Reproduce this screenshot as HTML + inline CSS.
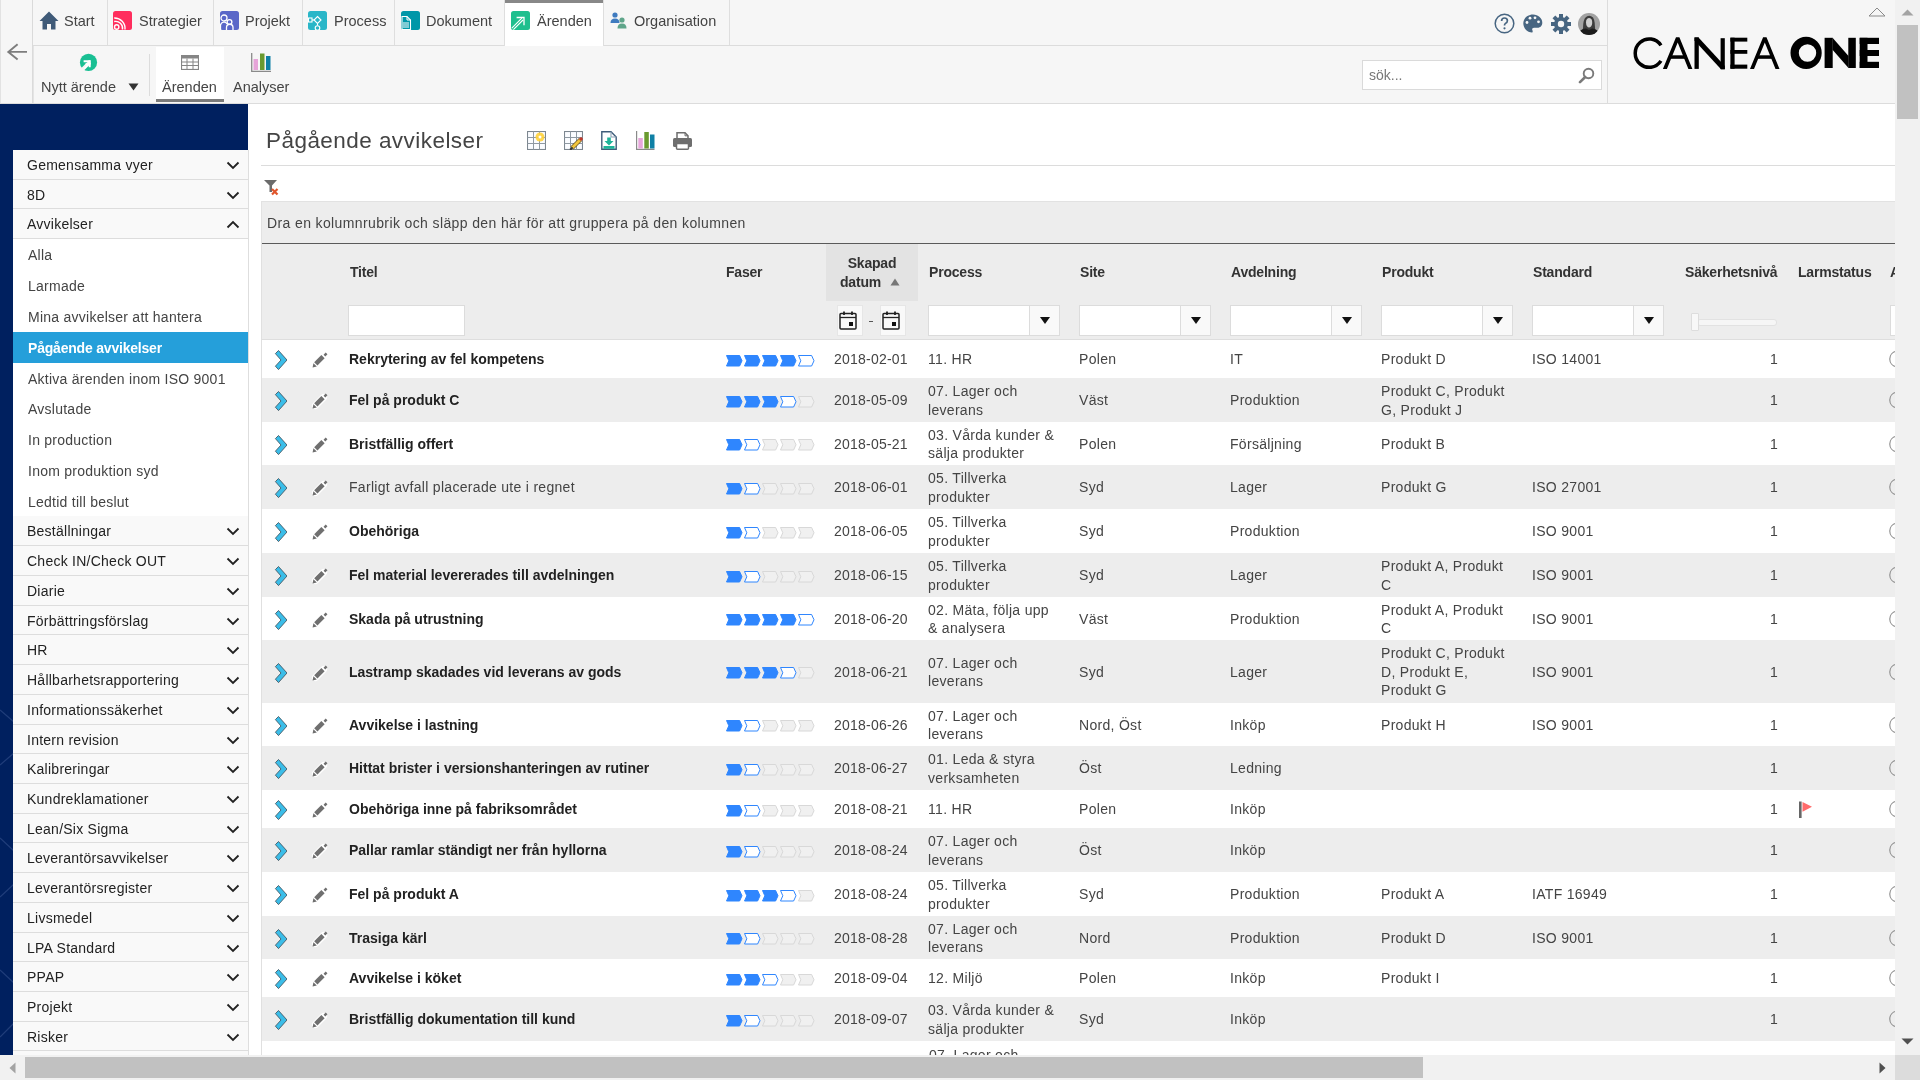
<!DOCTYPE html>
<html><head><meta charset="utf-8"><title>Pågående avvikelser</title>
<style>
*{box-sizing:border-box}
html,body{margin:0;padding:0}
body{width:1920px;height:1080px;overflow:hidden;position:relative;background:#fff;font-family:"Liberation Sans",sans-serif;font-size:14px;color:#333}
.abs{position:absolute}
#hdr{position:absolute;left:0;top:0;width:1895px;height:104px;background:#f6f6f6;border-bottom:1px solid #dcdcdc}
.vl{position:absolute;width:1px;background:#dedede}
.hl{position:absolute;height:1px;background:#dedede}
.tab{position:absolute;top:0;height:45px;font-size:14.5px;color:#444;line-height:45px;white-space:nowrap}
.tab .ic{position:absolute;top:11px;width:19px;height:19px;border-radius:3px}
.tl{position:absolute;top:14px;line-height:16px}
.tb{position:absolute;font-size:14.5px;color:#444;white-space:nowrap;line-height:16px}
#nav{position:absolute;left:0;top:104px;width:248px;height:951px;background:#00205f;overflow:hidden}
.sg,.ss{position:absolute;left:13px;width:235px;font-size:14px;white-space:nowrap;letter-spacing:0.25px}
.sg{background:#f9f9f9;border-bottom:1px solid #dddddd;color:#222}
.sg span{position:absolute;left:14px;top:7px;line-height:16px}
.ss{background:#fff;color:#444}
.ss span{position:absolute;left:15px;top:8px;line-height:16px}
.ss.sel{background:#259fda;color:#fff;font-weight:bold;letter-spacing:-0.2px}
.chev{position:absolute;left:226px}
#sidewhite{position:absolute;left:13px;top:150px;width:235px;height:905px;background:#fff}
.c{position:absolute;line-height:18px;white-space:nowrap;color:#444;font-size:14px;letter-spacing:0.3px}
.t{left:349px;color:#444}
.t.b{font-weight:bold;color:#222;letter-spacing:0}
.dt{left:834px;letter-spacing:0.22px}
.lv{left:1740px;width:38px;text-align:right}
.row{position:absolute;left:262px;width:1633px}
.exp{position:absolute;left:273px}
.pen{position:absolute;left:311px}
.ph{position:absolute;left:725.5px}
.hh{position:absolute;font-weight:bold;color:#333;font-size:14px;line-height:18px;white-space:nowrap;top:263px;letter-spacing:-0.2px}
.dd{position:absolute;top:305px;height:31px;background:#fff;border:1px solid #dcdcdc}
.dd i{position:absolute;right:0;top:0;width:30px;height:29px;background:#f9f9f9;border-left:1px solid #dcdcdc}
.dd i:after{content:"";position:absolute;left:10px;top:11px;border-left:5px solid transparent;border-right:5px solid transparent;border-top:7px solid #111}
</style></head><body>

<div id="wrap" style="position:absolute;left:0;top:0;width:1920px;height:1080px;will-change:transform">
<!-- header -->
<div id="hdr">
  <div class="vl" style="left:32px;top:0;height:103px;background:#dadada"></div><div class="vl" style="left:33px;top:46px;height:57px;background:#e4e4e4"></div>
  <div class="vl" style="left:0;top:0;height:103px;background:#e2e2e2"></div>
  <svg class="abs" style="left:6px;top:43px" width="22" height="18" viewBox="0 0 22 18"><path d="M21 8.9 H2.5 M11.6 1.2 L2.3 8.9 L11.6 16.6" fill="none" stroke="#7d7d7d" stroke-width="1.9"/></svg>
  <div class="hl" style="left:33px;top:45px;width:1575px;background:#dcdcdc"></div>
  <div class="vl" style="left:107px;top:0;height:45px"></div>
  <div class="vl" style="left:213px;top:0;height:45px"></div>
  <div class="vl" style="left:302px;top:0;height:45px"></div>
  <div class="vl" style="left:394px;top:0;height:45px"></div>
  <div class="vl" style="left:729px;top:0;height:45px"></div>
  <!-- selected tab -->
  <div class="abs" style="left:504px;top:0;width:100px;height:46px;background:#fff;border-left:1px solid #dedede;border-right:1px solid #dedede"></div>
  <div class="abs" style="left:505px;top:0;width:98px;height:3px;background:#888"></div>
  <!-- tab icons -->
  <svg class="abs" style="left:39px;top:11px" width="20" height="19" viewBox="0 0 20 19"><path d="M10 0.5 L19.5 10 H16.5 V18.5 H12 V13 H8 V18.5 H3.5 V10 H0.5 Z" fill="#3f5a78"/></svg>
  <div class="tb" style="left:64px;top:13px">Start</div>
  <svg class="abs" style="left:113px;top:11px" width="19" height="19" viewBox="0 0 19 19"><rect width="19" height="19" rx="2.5" fill="#ff2d5d"/><circle cx="3.7" cy="16" r="2.2" fill="none" stroke="#fff" stroke-width="1.4"/><path d="M1.2 10.5 A7 7 0 0 1 9.5 18.5" fill="none" stroke="#fff" stroke-width="1.4"/><path d="M1.2 7 A10.5 10.5 0 0 1 12 18.5" fill="none" stroke="#fff" stroke-width="1.4"/></svg>
  <div class="tb" style="left:139px;top:13px">Strategier</div>
  <svg class="abs" style="left:220px;top:11px" width="19" height="19" viewBox="0 0 19 19"><rect width="19" height="19" rx="2.5" fill="#5a67c8"/><circle cx="4" cy="7" r="3" fill="none" stroke="#fff" stroke-width="1.3"/><circle cx="9.5" cy="11" r="2.4" fill="none" stroke="#fff" stroke-width="1.3"/><path d="M0.5 19 V14 A3.5 3.5 0 0 1 7 13" fill="none" stroke="#fff" stroke-width="1.3"/><path d="M6.5 19 V16.5 A3 3 0 0 1 13 16.5 V19" fill="none" stroke="#fff" stroke-width="1.3"/></svg>
  <div class="tb" style="left:245px;top:13px">Projekt</div>
  <svg class="abs" style="left:308px;top:11px" width="19" height="19" viewBox="0 0 19 19"><rect width="19" height="19" rx="2.5" fill="#29b6c8"/><rect x="0.5" y="7" width="3.5" height="4" fill="none" stroke="#fff" stroke-width="1.1"/><path d="M4 9 H7" stroke="#fff" stroke-width="1.1"/><path d="M9.5 5.5 L13 9 L9.5 12.5 L6 9 Z" fill="none" stroke="#fff" stroke-width="1.1"/><path d="M9.5 12.5 V14.5" stroke="#fff" stroke-width="1.1"/><circle cx="9.5" cy="17" r="2.3" fill="none" stroke="#fff" stroke-width="1.1"/></svg>
  <div class="tb" style="left:334px;top:13px">Process</div>
  <svg class="abs" style="left:401px;top:11px" width="19" height="19" viewBox="0 0 19 19"><rect width="19" height="19" rx="2.5" fill="#0097a8"/><path d="M1 5 V18.5 H9.5 V9 L6 5.5 H1 Z" fill="none" stroke="#fff" stroke-width="1.1"/><path d="M6 5.5 V9 H9.5" fill="none" stroke="#fff" stroke-width="1"/><path d="M2 12 H8 M2 14 H8 M2 16 H8" stroke="#fff" stroke-width="1"/></svg>
  <div class="tb" style="left:426px;top:13px">Dokument</div>
  <svg class="abs" style="left:511px;top:11px" width="19" height="19" viewBox="0 0 19 19"><rect width="19" height="19" rx="2.5" fill="#1ebf8e"/><path d="M5.6 6.5 H13 V14.3" fill="none" stroke="#fff" stroke-width="1.3"/><path d="M0.8 17.2 L10.8 7.2 M2.4 18.6 L12 9" stroke="#fff" stroke-width="1.1"/></svg>
  <div class="tb" style="left:537px;top:13px">Ärenden</div>
  <svg class="abs" style="left:610px;top:12px" width="18" height="17" viewBox="0 0 18 17"><circle cx="5" cy="3" r="2.6" fill="#3f7bbf"/><path d="M0.5 11 Q0.5 6.5 5 6.5 Q9.5 6.5 9.5 11 Z" fill="#3f7bbf"/><circle cx="12" cy="8" r="2.6" fill="#5fa58a"/><path d="M7.5 16.5 Q7.5 11.5 12 11.5 Q16.5 11.5 16.5 16.5 Z" fill="#5fa58a"/></svg>
  <div class="tb" style="left:634px;top:13px">Organisation</div>

  <!-- second toolbar -->
  <svg class="abs" style="left:78px;top:52px" width="22" height="22" viewBox="0 0 22 22"><circle cx="10.5" cy="10.4" r="8.6" fill="#19bf93"/><path d="M4.4 17.6 L11.7 10.3" stroke="#f6f6f6" stroke-width="3.6"/><path d="M6.4 16.6 L11.4 11.6" stroke="#fff" stroke-width="1.3"/><path d="M5.6 9.2 H11.7 V15.3" fill="none" stroke="#fff" stroke-width="2"/><path d="M7.6 12.2 L11.4 12.2 L11.4 8.2" fill="none" stroke="#fff" stroke-width="2"/></svg>
  <div class="tb" style="left:41px;top:79px">Nytt ärende</div>
  <svg class="abs" style="left:128px;top:83px" width="11" height="8" viewBox="0 0 11 8"><path d="M0.5 0.5 H10.5 L5.5 7.5 Z" fill="#333"/></svg>
  <div class="vl" style="left:149px;top:54px;height:42px;background:#dcdcdc"></div>
  <div class="abs" style="left:156px;top:47px;width:68px;height:52px;background:#fff"></div>
  <div class="abs" style="left:156px;top:99px;width:68px;height:3px;background:#7a7a7a"></div>
  <svg class="abs" style="left:181px;top:55px" width="18" height="15" viewBox="0 0 18 15"><rect x="0.5" y="0.5" width="17" height="14" fill="#fff" stroke="#858585" stroke-width="1.2"/><rect x="0.5" y="0.5" width="17" height="3" fill="#858585"/><path d="M0.5 7 H17.5 M0.5 10.5 H17.5 M6 3.5 V14.5 M12 3.5 V14.5" stroke="#858585" stroke-width="1"/></svg>
  <div class="tb" style="left:162px;top:79px">Ärenden</div>
  <svg class="abs" style="left:251px;top:53px" width="21" height="19" viewBox="0 0 21 19"><path d="M0.7 0 V18.3 H20" fill="none" stroke="#8a8a8a" stroke-width="1.3"/><rect x="2.5" y="6" width="4.5" height="11" fill="#e6a3d8"/><rect x="9" y="0.5" width="4.5" height="16.5" fill="#6a9a2f"/><rect x="15" y="3" width="4.5" height="14" fill="#0f80a5"/></svg>
  <div class="tb" style="left:233px;top:79px">Analyser</div>

  <!-- right icons -->
  <svg class="abs" style="left:1494px;top:13px" width="21" height="21" viewBox="0 0 21 21"><circle cx="10.5" cy="10.5" r="9.3" fill="none" stroke="#476581" stroke-width="1.5"/><path d="M7.6 8 Q7.6 5 10.5 5 Q13.4 5 13.4 7.8 Q13.4 9.6 11.3 10.6 Q10.5 11.1 10.5 12.6" fill="none" stroke="#476581" stroke-width="1.7"/><circle cx="10.5" cy="15.3" r="1.1" fill="#476581"/></svg>
  <svg class="abs" style="left:1523px;top:14px" width="20" height="19" viewBox="0 0 20 19"><path d="M10 0.5 C4.5 0.5 0.3 4.5 0.3 9.3 C0.3 14 4 18.5 8.8 18.5 C10 18.5 9.8 17 9.3 16 C8.8 15 9.5 13.8 11 13.8 H14.5 C17.5 13.8 19.3 11.6 19.3 8.8 C19.3 4.2 15.2 0.5 10 0.5 Z" fill="#476581"/><circle cx="4" cy="8.5" r="1.4" fill="#f6f6f6"/><circle cx="7" cy="4.2" r="1.4" fill="#f6f6f6"/><circle cx="12" cy="3.8" r="1.4" fill="#f6f6f6"/><circle cx="15.5" cy="7.8" r="1.4" fill="#f6f6f6"/></svg>
  <svg class="abs" style="left:1551px;top:14px" width="20" height="20" viewBox="0 0 20 20"><g fill="#476581"><rect x="8" y="0" width="4" height="20"/><rect x="0" y="8" width="20" height="4"/><rect x="8" y="0" width="4" height="20" transform="rotate(45 10 10)"/><rect x="8" y="0" width="4" height="20" transform="rotate(-45 10 10)"/><circle cx="10" cy="10" r="7"/></g><circle cx="10" cy="10" r="3.2" fill="#f6f6f6"/></svg>
  <svg class="abs" style="left:1578px;top:13px" width="22" height="22" viewBox="0 0 22 22"><defs><clipPath id="av"><circle cx="11" cy="11" r="11"/></clipPath></defs><g clip-path="url(#av)"><rect width="22" height="22" fill="#a2a2a2"/><path d="M5 21 Q4.5 9 7 5 Q11 1 15 4.5 Q17.5 8 17 21 Z" fill="#3c3c3c"/><path d="M8 9.5 Q8 5 11.3 5 Q14.3 5.3 14.2 9.8 Q14 14 11.2 14.6 Q8.2 14.2 8 9.5 Z" fill="#cfcfcf"/><path d="M0 22 Q1 16 8 15.5 L11 17 L14 15.5 Q20.5 16 22 22 Z" fill="#1c1c1c"/></g></svg>
  <div class="vl" style="left:1607px;top:0;height:103px;background:#dcdcdc"></div>
  <div class="abs" style="left:1362px;top:60px;width:240px;height:30px;background:#fff;border:1px solid #dadada"></div>
  <div class="abs" style="left:1369px;top:67px;font-size:14px;color:#777;line-height:16px">sök...</div>
  <svg class="abs" style="left:1578px;top:67px" width="17" height="17" viewBox="0 0 17 17"><circle cx="10.5" cy="6.5" r="4.8" fill="none" stroke="#7a7a7a" stroke-width="1.9"/><path d="M7.2 10 L2 15.2" stroke="#7a7a7a" stroke-width="2.6" stroke-linecap="round"/></svg>
  <!-- logo -->
  <svg class="abs" style="left:1620px;top:25px" width="270" height="55" viewBox="0 0 270 55">
    <path d="M40.95 20.4 A14 14.2 0 1 0 40.95 35.9" fill="none" stroke="#000" stroke-width="3.5"/>
    <g fill="#000">
      <polygon points="42.9,43.9 56,12.2 59.4,12.2 72.4,43.9 68.4,43.9 57.7,17.6 46.9,43.9"/>
      <rect x="49" y="30.3" width="17.5" height="3.5"/>
      <rect x="74.5" y="12.4" width="4.3" height="31.5"/>
      <polygon points="74.5,12.4 78.5,12.4 104.8,41 104.8,44.2 101,44.2 74.5,15.6"/>
      <rect x="100.6" y="13.2" width="4.2" height="31"/>
      <rect x="110.4" y="12.7" width="4.2" height="31"/>
      <rect x="110.4" y="12.7" width="16.9" height="3.9"/>
      <rect x="110.4" y="25" width="16.9" height="3.8"/>
      <rect x="110.4" y="39.6" width="16.9" height="4.1"/>
      <polygon points="130,43.9 143.1,12.2 146.5,12.2 159.5,43.9 155.5,43.9 144.8,17.6 134,43.9"/>
      <rect x="136.1" y="30.3" width="17.5" height="3.5"/>
      <path fill-rule="evenodd" d="M186.1 11.8 A15.6 16.1 0 1 1 186.1 44 A15.6 16.1 0 1 1 186.1 11.8 Z M187.5 19.3 A8.7 8.75 0 1 0 187.5 36.8 A8.7 8.75 0 1 0 187.5 19.3 Z"/>
      <rect x="204.6" y="12.8" width="8.1" height="30.2"/>
      <rect x="228.3" y="12.8" width="7.5" height="30.2"/>
      <polygon points="212.5,12.8 228.5,31 228.5,43 212.5,24.8"/>
      <rect x="239.7" y="12.8" width="7.8" height="30.2"/>
      <rect x="239.7" y="12.8" width="19.3" height="6.2"/>
      <rect x="239.7" y="25" width="19.3" height="6"/>
      <rect x="239.7" y="36.8" width="19.3" height="6.2"/>
    </g>
  </svg>
  <svg class="abs" style="left:1868px;top:7px" width="18" height="10" viewBox="0 0 18 10"><path d="M1 9 L9 1 L17 9 Z" fill="none" stroke="#8a8a8a" stroke-width="1"/></svg>
</div>

<!-- sidebar -->
<div id="nav">
  <svg class="abs" style="left:0;top:0" width="248" height="951" viewBox="0 0 248 951"><g stroke="#3a5590" stroke-width="1.2" fill="none" opacity="0.55"><path d="M0 606 L14 618"/><path d="M0 661 L14 649"/><path d="M0 734 L14 747"/><path d="M0 793 L14 780"/><path d="M0 866 L14 879"/><path d="M0 933 L14 919"/></g></svg>
</div>
<div class="abs" style="left:0;top:0;width:248px;height:1055px;overflow:hidden"><div id="sidewhite"></div>
<div class="sg" style="top:150px;height:30px"><span>Gemensamma vyer</span></div>
<svg class="chev" style="top:161px" width="14" height="9" viewBox="0 0 14 9"><path d="M1.5 1.5 L7 7 L12.5 1.5" fill="none" stroke="#222" stroke-width="1.8"/></svg>
<div class="sg" style="top:180px;height:29px"><span>8D</span></div>
<svg class="chev" style="top:191px" width="14" height="9" viewBox="0 0 14 9"><path d="M1.5 1.5 L7 7 L12.5 1.5" fill="none" stroke="#222" stroke-width="1.8"/></svg>
<div class="sg" style="top:209px;height:30px"><span>Avvikelser</span></div>
<svg class="chev" style="top:220px" width="14" height="9" viewBox="0 0 14 9"><path d="M1.5 7.5 L7 2 L12.5 7.5" fill="none" stroke="#222" stroke-width="1.8"/></svg>
<div class="ss" style="top:239px;height:31px"><span>Alla</span></div>
<div class="ss" style="top:270px;height:31px"><span>Larmade</span></div>
<div class="ss" style="top:301px;height:31px"><span>Mina avvikelser att hantera</span></div>
<div class="ss sel" style="top:332px;height:31px"><span>Pågående avvikelser</span></div>
<div class="ss" style="top:363px;height:30px"><span>Aktiva ärenden inom ISO 9001</span></div>
<div class="ss" style="top:393px;height:31px"><span>Avslutade</span></div>
<div class="ss" style="top:424px;height:31px"><span>In production</span></div>
<div class="ss" style="top:455px;height:31px"><span>Inom produktion syd</span></div>
<div class="ss" style="top:486px;height:31px"><span>Ledtid till beslut</span></div>
<div class="sg" style="top:516px;height:30px"><span>Beställningar</span></div>
<svg class="chev" style="top:527px" width="14" height="9" viewBox="0 0 14 9"><path d="M1.5 1.5 L7 7 L12.5 1.5" fill="none" stroke="#222" stroke-width="1.8"/></svg>
<div class="sg" style="top:546px;height:30px"><span>Check IN/Check OUT</span></div>
<svg class="chev" style="top:557px" width="14" height="9" viewBox="0 0 14 9"><path d="M1.5 1.5 L7 7 L12.5 1.5" fill="none" stroke="#222" stroke-width="1.8"/></svg>
<div class="sg" style="top:576px;height:30px"><span>Diarie</span></div>
<svg class="chev" style="top:587px" width="14" height="9" viewBox="0 0 14 9"><path d="M1.5 1.5 L7 7 L12.5 1.5" fill="none" stroke="#222" stroke-width="1.8"/></svg>
<div class="sg" style="top:606px;height:29px"><span>Förbättringsförslag</span></div>
<svg class="chev" style="top:617px" width="14" height="9" viewBox="0 0 14 9"><path d="M1.5 1.5 L7 7 L12.5 1.5" fill="none" stroke="#222" stroke-width="1.8"/></svg>
<div class="sg" style="top:635px;height:30px"><span>HR</span></div>
<svg class="chev" style="top:646px" width="14" height="9" viewBox="0 0 14 9"><path d="M1.5 1.5 L7 7 L12.5 1.5" fill="none" stroke="#222" stroke-width="1.8"/></svg>
<div class="sg" style="top:665px;height:30px"><span>Hållbarhetsrapportering</span></div>
<svg class="chev" style="top:676px" width="14" height="9" viewBox="0 0 14 9"><path d="M1.5 1.5 L7 7 L12.5 1.5" fill="none" stroke="#222" stroke-width="1.8"/></svg>
<div class="sg" style="top:695px;height:30px"><span>Informationssäkerhet</span></div>
<svg class="chev" style="top:706px" width="14" height="9" viewBox="0 0 14 9"><path d="M1.5 1.5 L7 7 L12.5 1.5" fill="none" stroke="#222" stroke-width="1.8"/></svg>
<div class="sg" style="top:725px;height:29px"><span>Intern revision</span></div>
<svg class="chev" style="top:736px" width="14" height="9" viewBox="0 0 14 9"><path d="M1.5 1.5 L7 7 L12.5 1.5" fill="none" stroke="#222" stroke-width="1.8"/></svg>
<div class="sg" style="top:754px;height:30px"><span>Kalibreringar</span></div>
<svg class="chev" style="top:765px" width="14" height="9" viewBox="0 0 14 9"><path d="M1.5 1.5 L7 7 L12.5 1.5" fill="none" stroke="#222" stroke-width="1.8"/></svg>
<div class="sg" style="top:784px;height:30px"><span>Kundreklamationer</span></div>
<svg class="chev" style="top:795px" width="14" height="9" viewBox="0 0 14 9"><path d="M1.5 1.5 L7 7 L12.5 1.5" fill="none" stroke="#222" stroke-width="1.8"/></svg>
<div class="sg" style="top:814px;height:29px"><span>Lean/Six Sigma</span></div>
<svg class="chev" style="top:825px" width="14" height="9" viewBox="0 0 14 9"><path d="M1.5 1.5 L7 7 L12.5 1.5" fill="none" stroke="#222" stroke-width="1.8"/></svg>
<div class="sg" style="top:843px;height:30px"><span>Leverantörsavvikelser</span></div>
<svg class="chev" style="top:854px" width="14" height="9" viewBox="0 0 14 9"><path d="M1.5 1.5 L7 7 L12.5 1.5" fill="none" stroke="#222" stroke-width="1.8"/></svg>
<div class="sg" style="top:873px;height:30px"><span>Leverantörsregister</span></div>
<svg class="chev" style="top:884px" width="14" height="9" viewBox="0 0 14 9"><path d="M1.5 1.5 L7 7 L12.5 1.5" fill="none" stroke="#222" stroke-width="1.8"/></svg>
<div class="sg" style="top:903px;height:30px"><span>Livsmedel</span></div>
<svg class="chev" style="top:914px" width="14" height="9" viewBox="0 0 14 9"><path d="M1.5 1.5 L7 7 L12.5 1.5" fill="none" stroke="#222" stroke-width="1.8"/></svg>
<div class="sg" style="top:933px;height:29px"><span>LPA Standard</span></div>
<svg class="chev" style="top:944px" width="14" height="9" viewBox="0 0 14 9"><path d="M1.5 1.5 L7 7 L12.5 1.5" fill="none" stroke="#222" stroke-width="1.8"/></svg>
<div class="sg" style="top:962px;height:30px"><span>PPAP</span></div>
<svg class="chev" style="top:973px" width="14" height="9" viewBox="0 0 14 9"><path d="M1.5 1.5 L7 7 L12.5 1.5" fill="none" stroke="#222" stroke-width="1.8"/></svg>
<div class="sg" style="top:992px;height:30px"><span>Projekt</span></div>
<svg class="chev" style="top:1003px" width="14" height="9" viewBox="0 0 14 9"><path d="M1.5 1.5 L7 7 L12.5 1.5" fill="none" stroke="#222" stroke-width="1.8"/></svg>
<div class="sg" style="top:1022px;height:29px"><span>Risker</span></div>
<svg class="chev" style="top:1033px" width="14" height="9" viewBox="0 0 14 9"><path d="M1.5 1.5 L7 7 L12.5 1.5" fill="none" stroke="#222" stroke-width="1.8"/></svg>
<div class="sg" style="top:1051px;height:30px"><span>Rutiner</span></div>
<svg class="chev" style="top:1062px" width="14" height="9" viewBox="0 0 14 9"><path d="M1.5 1.5 L7 7 L12.5 1.5" fill="none" stroke="#222" stroke-width="1.8"/></svg>
</div>

<!-- main -->
<div class="abs" style="left:248px;top:150px;width:1px;height:905px;background:#dedede;z-index:2"></div>
<div class="abs" style="left:248px;top:104px;width:1647px;height:951px;background:#fff;overflow:hidden"></div>
<div class="abs" style="left:266px;top:128px;font-size:22.5px;color:#444;line-height:26px;white-space:nowrap;letter-spacing:0.45px">Pågående avvikelser</div>
<!-- toolbar icons -->
<svg class="abs" style="left:527px;top:131px" width="19" height="19" viewBox="0 0 19 19"><rect x="0.5" y="0.5" width="18" height="18" fill="#fafcff" stroke="#7d8790" stroke-width="1.1"/><path d="M6.5 0.5 V18.5 M12.5 0.5 V18.5 M0.5 6.5 H18.5 M0.5 12.5 H18.5" stroke="#8f99a2" stroke-width="1"/><circle cx="13" cy="6" r="4.5" fill="#ffd23a" opacity="0.9"/><circle cx="13" cy="6" r="1.5" fill="#fff"/></svg>
<svg class="abs" style="left:564px;top:131px" width="19" height="19" viewBox="0 0 19 19"><rect x="0.5" y="0.5" width="18" height="18" fill="#fafcff" stroke="#7d8790" stroke-width="1.1"/><path d="M6.5 0.5 V18.5 M12.5 0.5 V18.5 M0.5 6.5 H18.5 M0.5 12.5 H18.5" stroke="#8f99a2" stroke-width="1"/><path d="M8 17 L16.5 8.5" stroke="#5a4a1a" stroke-width="4.2"/><path d="M8 17 L16.5 8.5" stroke="#f2c53d" stroke-width="3"/><circle cx="17" cy="8" r="1.8" fill="#c0392b"/><path d="M6.2 18.8 L8.6 16.4" stroke="#333" stroke-width="2"/></svg>
<svg class="abs" style="left:601px;top:131px" width="16" height="19" viewBox="0 0 16 19"><path d="M0.8 0.8 H10 L15.2 6 V18.2 H0.8 Z" fill="#fff" stroke="#3f5d7a" stroke-width="1.4"/><path d="M10 0.8 V6 H15.2" fill="none" stroke="#8aa0b4" stroke-width="1.1"/><path d="M6.2 6.5 H9.8 V10 H12.5 L8 14.5 L3.5 10 H6.2 Z" fill="#1fb39a"/><rect x="2.5" y="15" width="11" height="2.8" fill="#1fb39a"/></svg>
<svg class="abs" style="left:636px;top:131px" width="19" height="19" viewBox="0 0 19 19"><path d="M0.6 0 V18.4 H18.5" fill="none" stroke="#8a8a8a" stroke-width="1.2"/><rect x="2.3" y="7" width="4.5" height="10.5" fill="#e8a6dc"/><rect x="8.3" y="1" width="4.5" height="16.5" fill="#6a9a2f"/><rect x="14" y="3.5" width="4.5" height="14" fill="#0f80a5"/></svg>
<svg class="abs" style="left:673px;top:132px" width="19" height="18" viewBox="0 0 19 18"><path d="M4 0.8 H12 L15 3.8 V7 H4 Z" fill="#fff" stroke="#6e6e6e" stroke-width="1.5"/><path d="M12 0.8 V3.8 H15" fill="none" stroke="#6e6e6e" stroke-width="1"/><rect x="0" y="6" width="19" height="9" rx="1.5" fill="#6e6e6e"/><rect x="3.5" y="11.5" width="12" height="5.7" rx="1" fill="#fff" stroke="#6e6e6e" stroke-width="1.5"/></svg>

<div class="hl" style="left:261px;top:165px;width:1634px;background:#dcdcdc"></div>
<svg class="abs" style="left:264px;top:180px" width="17" height="17" viewBox="0 0 17 17"><path d="M0 0 H13 L8 5.5 V12 H5.5 V5.5 Z" fill="#6b6b6b"/><path d="M8 9 L13.5 14.5 M13.5 9 L8 14.5" stroke="#e0552b" stroke-width="2.2"/></svg>

<!-- group panel -->
<div class="abs" style="left:261px;top:201px;width:1634px;height:43px;background:#ededed;border-top:1px solid #e2e2e2;border-left:1px solid #e2e2e2"></div>
<div class="abs" style="left:267px;top:215px;font-size:14px;color:#444;line-height:16px;white-space:nowrap;letter-spacing:0.38px">Dra en kolumnrubrik och släpp den här för att gruppera på den kolumnen</div>
<div class="hl" style="left:262px;top:243px;width:1633px;background:#5a5a5a"></div>
<!-- grid header -->
<div class="abs" style="left:261px;top:244px;width:1634px;height:96px;background:#ededed;border-left:1px solid #e0e0e0;border-bottom:1px solid #dedede"></div>
<div class="abs" style="left:826px;top:244px;width:92px;height:57px;background:#e3e3e3"></div>
<div class="hh" style="left:350px">Titel</div>
<div class="hh" style="left:726px">Faser</div>
<div class="hh" style="left:826px;width:92px;text-align:center;top:254px">Skapad</div><div class="hh" style="left:840px;top:273px">datum</div>
<svg class="abs" style="left:890px;top:278px" width="10" height="8" viewBox="0 0 10 8"><path d="M0.5 7.5 L5 0.5 L9.5 7.5 Z" fill="#777"/></svg>
<div class="hh" style="left:929px">Process</div>
<div class="hh" style="left:1080px">Site</div>
<div class="hh" style="left:1231px">Avdelning</div>
<div class="hh" style="left:1382px">Produkt</div>
<div class="hh" style="left:1533px">Standard</div>
<div class="hh" style="left:1685px">Säkerhetsnivå</div>
<div class="hh" style="left:1798px">Larmstatus</div>
<div class="hh" style="left:1890px;width:5px;overflow:hidden">A</div>
<!-- filters -->
<div class="abs" style="left:348px;top:305px;width:117px;height:31px;background:#fff;border:1px solid #dcdcdc"></div>
<div class="abs" style="left:837px;top:305px;width:26px;height:31px;background:#f9f9f9;border:1px solid #e6e6e6"></div>
<div class="abs" style="left:880px;top:305px;width:26px;height:31px;background:#f9f9f9;border:1px solid #e6e6e6"></div>
<svg class="abs" style="left:839px;top:311px" width="18" height="19" viewBox="0 0 18 19"><rect x="1" y="2.5" width="16" height="15.5" rx="1" fill="none" stroke="#222" stroke-width="1.5"/><path d="M1 6.5 H17" stroke="#222" stroke-width="1.3"/><path d="M5 0.5 V4 M13 0.5 V4" stroke="#222" stroke-width="1.8"/><rect x="10" y="11" width="4" height="4" fill="#111"/></svg>
<svg class="abs" style="left:882px;top:311px" width="18" height="19" viewBox="0 0 18 19"><rect x="1" y="2.5" width="16" height="15.5" rx="1" fill="none" stroke="#222" stroke-width="1.5"/><path d="M1 6.5 H17" stroke="#222" stroke-width="1.3"/><path d="M5 0.5 V4 M13 0.5 V4" stroke="#222" stroke-width="1.8"/><rect x="10" y="11" width="4" height="4" fill="#111"/></svg>
<div class="abs" style="left:869px;top:321px;width:4px;height:1px;background:#555"></div>
<div class="dd" style="left:928px;width:132px"><i></i></div>
<div class="dd" style="left:1079px;width:132px"><i></i></div>
<div class="dd" style="left:1230px;width:132px"><i></i></div>
<div class="dd" style="left:1381px;width:132px"><i></i></div>
<div class="dd" style="left:1532px;width:132px"><i></i></div>
<div class="abs" style="left:1697px;top:319px;width:80px;height:7px;background:#f6f6f6;border:1px solid #e2e2e2;border-radius:3px"></div>
<div class="abs" style="left:1691px;top:313px;width:8px;height:18px;background:#f8f8f8;border:1px solid #dddddd;border-radius:1px"></div>
<div class="abs" style="left:1890px;top:305px;width:5px;height:31px;background:#fff;border:1px solid #dcdcdc;border-right:none"></div>

<!-- rows -->
<div class="abs" style="left:261px;top:340px;width:1px;height:715px;background:#e0e0e0"></div>
<div class="row" style="top:340px;height:38px;background:#fff"></div>
<svg class="exp" style="top:349.0px" width="14" height="22" viewBox="0 0 14 22"><polygon points="5.5,1.5 14,11 5.5,20.6 2.4,17.2 8,11 2.4,4.6" fill="#3bbde8" stroke="#3a4a55" stroke-width="0.8" stroke-linejoin="round"/></svg>
<svg class="pen" style="top:351.0px" width="18" height="18" viewBox="0 0 18 18"><path d="M4.5 13.5 L12.5 5.5" stroke="#fff" stroke-width="7" stroke-linecap="round"/><path d="M4.8 12.8 L12 5.6" stroke="#6f6f6f" stroke-width="4.6" stroke-linecap="butt"/><polygon points="1.6,16.4 2.4,12.2 5.8,15.6" fill="#6f6f6f"/><path d="M13.6 2.6 L15.4 4.4" stroke="#6f6f6f" stroke-width="3"/></svg>
<div class="c t b" style="top:350.0px">Rekrytering av fel kompetens</div>
<svg class="ph" style="top:354.7px" width="92" height="12" viewBox="0 0 92 12"><polygon points="0.5,0.5 13.6,0.5 16,5.75 13.6,11 0.5,11 2.8,5.75" fill="#2f86fe" stroke="#2f86fe" stroke-width="1"/><polygon points="18.5,0.5 31.6,0.5 34,5.75 31.6,11 18.5,11 20.8,5.75" fill="#2f86fe" stroke="#2f86fe" stroke-width="1"/><polygon points="36.5,0.5 49.6,0.5 52,5.75 49.6,11 36.5,11 38.8,5.75" fill="#2f86fe" stroke="#2f86fe" stroke-width="1"/><polygon points="54.5,0.5 67.6,0.5 70,5.75 67.6,11 54.5,11 56.8,5.75" fill="#2f86fe" stroke="#2f86fe" stroke-width="1"/><polygon points="72.5,0.5 85.6,0.5 88,5.75 85.6,11 72.5,11 74.8,5.75" fill="#fff" stroke="#2f86fe" stroke-width="1"/></svg>
<div class="c dt" style="top:350.0px">2018-02-01</div>
<div class="c pr" style="left:928px;top:350.35px;line-height:18.5px">11. HR</div>
<div class="c" style="left:1079px;top:350.0px">Polen</div>
<div class="c" style="left:1230px;top:350.0px">IT</div>
<div class="c pd" style="left:1381px;top:350.35px;line-height:18.5px">Produkt D</div>
<div class="c" style="left:1532px;top:350.0px">ISO 14001</div>
<div class="c lv" style="top:350.0px">1</div>
<svg style="position:absolute;left:1888px;top:350.0px" width="8" height="18" viewBox="0 0 8 18"><path d="M8 1.2 A8 8 0 0 0 8 16.8" fill="none" stroke="#8a8a8a" stroke-width="1.1"/></svg>
<div class="row" style="top:378px;height:44px;background:#ededed"></div>
<svg class="exp" style="top:390.0px" width="14" height="22" viewBox="0 0 14 22"><polygon points="5.5,1.5 14,11 5.5,20.6 2.4,17.2 8,11 2.4,4.6" fill="#3bbde8" stroke="#3a4a55" stroke-width="0.8" stroke-linejoin="round"/></svg>
<svg class="pen" style="top:392.0px" width="18" height="18" viewBox="0 0 18 18"><path d="M4.5 13.5 L12.5 5.5" stroke="#fff" stroke-width="7" stroke-linecap="round"/><path d="M4.8 12.8 L12 5.6" stroke="#6f6f6f" stroke-width="4.6" stroke-linecap="butt"/><polygon points="1.6,16.4 2.4,12.2 5.8,15.6" fill="#6f6f6f"/><path d="M13.6 2.6 L15.4 4.4" stroke="#6f6f6f" stroke-width="3"/></svg>
<div class="c t b" style="top:391.0px">Fel på produkt C</div>
<svg class="ph" style="top:395.7px" width="92" height="12" viewBox="0 0 92 12"><polygon points="0.5,0.5 13.6,0.5 16,5.75 13.6,11 0.5,11 2.8,5.75" fill="#2f86fe" stroke="#2f86fe" stroke-width="1"/><polygon points="18.5,0.5 31.6,0.5 34,5.75 31.6,11 18.5,11 20.8,5.75" fill="#2f86fe" stroke="#2f86fe" stroke-width="1"/><polygon points="36.5,0.5 49.6,0.5 52,5.75 49.6,11 36.5,11 38.8,5.75" fill="#2f86fe" stroke="#2f86fe" stroke-width="1"/><polygon points="54.5,0.5 67.6,0.5 70,5.75 67.6,11 54.5,11 56.8,5.75" fill="#fff" stroke="#2f86fe" stroke-width="1"/><polygon points="72.5,0.5 85.6,0.5 88,5.75 85.6,11 72.5,11 74.8,5.75" fill="#f0f0f0" stroke="#d8d8d8" stroke-width="1"/></svg>
<div class="c dt" style="top:391.0px">2018-05-09</div>
<div class="c pr" style="left:928px;top:382.10px;line-height:18.5px">07. Lager och<br>leverans</div>
<div class="c" style="left:1079px;top:391.0px">Väst</div>
<div class="c" style="left:1230px;top:391.0px">Produktion</div>
<div class="c pd" style="left:1381px;top:382.10px;line-height:18.5px">Produkt C, Produkt<br>G, Produkt J</div>
<div class="c lv" style="top:391.0px">1</div>
<svg style="position:absolute;left:1888px;top:391.0px" width="8" height="18" viewBox="0 0 8 18"><path d="M8 1.2 A8 8 0 0 0 8 16.8" fill="none" stroke="#8a8a8a" stroke-width="1.1"/></svg>
<div class="row" style="top:422px;height:43px;background:#fff"></div>
<svg class="exp" style="top:433.5px" width="14" height="22" viewBox="0 0 14 22"><polygon points="5.5,1.5 14,11 5.5,20.6 2.4,17.2 8,11 2.4,4.6" fill="#3bbde8" stroke="#3a4a55" stroke-width="0.8" stroke-linejoin="round"/></svg>
<svg class="pen" style="top:435.5px" width="18" height="18" viewBox="0 0 18 18"><path d="M4.5 13.5 L12.5 5.5" stroke="#fff" stroke-width="7" stroke-linecap="round"/><path d="M4.8 12.8 L12 5.6" stroke="#6f6f6f" stroke-width="4.6" stroke-linecap="butt"/><polygon points="1.6,16.4 2.4,12.2 5.8,15.6" fill="#6f6f6f"/><path d="M13.6 2.6 L15.4 4.4" stroke="#6f6f6f" stroke-width="3"/></svg>
<div class="c t b" style="top:434.5px">Bristfällig offert</div>
<svg class="ph" style="top:439.2px" width="92" height="12" viewBox="0 0 92 12"><polygon points="0.5,0.5 13.6,0.5 16,5.75 13.6,11 0.5,11 2.8,5.75" fill="#2f86fe" stroke="#2f86fe" stroke-width="1"/><polygon points="18.5,0.5 31.6,0.5 34,5.75 31.6,11 18.5,11 20.8,5.75" fill="#fff" stroke="#2f86fe" stroke-width="1"/><polygon points="36.5,0.5 49.6,0.5 52,5.75 49.6,11 36.5,11 38.8,5.75" fill="#f0f0f0" stroke="#d8d8d8" stroke-width="1"/><polygon points="54.5,0.5 67.6,0.5 70,5.75 67.6,11 54.5,11 56.8,5.75" fill="#f0f0f0" stroke="#d8d8d8" stroke-width="1"/><polygon points="72.5,0.5 85.6,0.5 88,5.75 85.6,11 72.5,11 74.8,5.75" fill="#f0f0f0" stroke="#d8d8d8" stroke-width="1"/></svg>
<div class="c dt" style="top:434.5px">2018-05-21</div>
<div class="c pr" style="left:928px;top:425.60px;line-height:18.5px">03. Vårda kunder &<br>sälja produkter</div>
<div class="c" style="left:1079px;top:434.5px">Polen</div>
<div class="c" style="left:1230px;top:434.5px">Försäljning</div>
<div class="c pd" style="left:1381px;top:434.85px;line-height:18.5px">Produkt B</div>
<div class="c lv" style="top:434.5px">1</div>
<svg style="position:absolute;left:1888px;top:434.5px" width="8" height="18" viewBox="0 0 8 18"><path d="M8 1.2 A8 8 0 0 0 8 16.8" fill="none" stroke="#8a8a8a" stroke-width="1.1"/></svg>
<div class="row" style="top:465px;height:44px;background:#ededed"></div>
<svg class="exp" style="top:477.0px" width="14" height="22" viewBox="0 0 14 22"><polygon points="5.5,1.5 14,11 5.5,20.6 2.4,17.2 8,11 2.4,4.6" fill="#3bbde8" stroke="#3a4a55" stroke-width="0.8" stroke-linejoin="round"/></svg>
<svg class="pen" style="top:479.0px" width="18" height="18" viewBox="0 0 18 18"><path d="M4.5 13.5 L12.5 5.5" stroke="#fff" stroke-width="7" stroke-linecap="round"/><path d="M4.8 12.8 L12 5.6" stroke="#6f6f6f" stroke-width="4.6" stroke-linecap="butt"/><polygon points="1.6,16.4 2.4,12.2 5.8,15.6" fill="#6f6f6f"/><path d="M13.6 2.6 L15.4 4.4" stroke="#6f6f6f" stroke-width="3"/></svg>
<div class="c t" style="top:478.0px">Farligt avfall placerade ute i regnet</div>
<svg class="ph" style="top:482.7px" width="92" height="12" viewBox="0 0 92 12"><polygon points="0.5,0.5 13.6,0.5 16,5.75 13.6,11 0.5,11 2.8,5.75" fill="#2f86fe" stroke="#2f86fe" stroke-width="1"/><polygon points="18.5,0.5 31.6,0.5 34,5.75 31.6,11 18.5,11 20.8,5.75" fill="#fff" stroke="#2f86fe" stroke-width="1"/><polygon points="36.5,0.5 49.6,0.5 52,5.75 49.6,11 36.5,11 38.8,5.75" fill="#f0f0f0" stroke="#d8d8d8" stroke-width="1"/><polygon points="54.5,0.5 67.6,0.5 70,5.75 67.6,11 54.5,11 56.8,5.75" fill="#f0f0f0" stroke="#d8d8d8" stroke-width="1"/><polygon points="72.5,0.5 85.6,0.5 88,5.75 85.6,11 72.5,11 74.8,5.75" fill="#f0f0f0" stroke="#d8d8d8" stroke-width="1"/></svg>
<div class="c dt" style="top:478.0px">2018-06-01</div>
<div class="c pr" style="left:928px;top:469.10px;line-height:18.5px">05. Tillverka<br>produkter</div>
<div class="c" style="left:1079px;top:478.0px">Syd</div>
<div class="c" style="left:1230px;top:478.0px">Lager</div>
<div class="c pd" style="left:1381px;top:478.35px;line-height:18.5px">Produkt G</div>
<div class="c" style="left:1532px;top:478.0px">ISO 27001</div>
<div class="c lv" style="top:478.0px">1</div>
<svg style="position:absolute;left:1888px;top:478.0px" width="8" height="18" viewBox="0 0 8 18"><path d="M8 1.2 A8 8 0 0 0 8 16.8" fill="none" stroke="#8a8a8a" stroke-width="1.1"/></svg>
<div class="row" style="top:509px;height:44px;background:#fff"></div>
<svg class="exp" style="top:521.0px" width="14" height="22" viewBox="0 0 14 22"><polygon points="5.5,1.5 14,11 5.5,20.6 2.4,17.2 8,11 2.4,4.6" fill="#3bbde8" stroke="#3a4a55" stroke-width="0.8" stroke-linejoin="round"/></svg>
<svg class="pen" style="top:523.0px" width="18" height="18" viewBox="0 0 18 18"><path d="M4.5 13.5 L12.5 5.5" stroke="#fff" stroke-width="7" stroke-linecap="round"/><path d="M4.8 12.8 L12 5.6" stroke="#6f6f6f" stroke-width="4.6" stroke-linecap="butt"/><polygon points="1.6,16.4 2.4,12.2 5.8,15.6" fill="#6f6f6f"/><path d="M13.6 2.6 L15.4 4.4" stroke="#6f6f6f" stroke-width="3"/></svg>
<div class="c t b" style="top:522.0px">Obehöriga</div>
<svg class="ph" style="top:526.7px" width="92" height="12" viewBox="0 0 92 12"><polygon points="0.5,0.5 13.6,0.5 16,5.75 13.6,11 0.5,11 2.8,5.75" fill="#2f86fe" stroke="#2f86fe" stroke-width="1"/><polygon points="18.5,0.5 31.6,0.5 34,5.75 31.6,11 18.5,11 20.8,5.75" fill="#fff" stroke="#2f86fe" stroke-width="1"/><polygon points="36.5,0.5 49.6,0.5 52,5.75 49.6,11 36.5,11 38.8,5.75" fill="#f0f0f0" stroke="#d8d8d8" stroke-width="1"/><polygon points="54.5,0.5 67.6,0.5 70,5.75 67.6,11 54.5,11 56.8,5.75" fill="#f0f0f0" stroke="#d8d8d8" stroke-width="1"/><polygon points="72.5,0.5 85.6,0.5 88,5.75 85.6,11 72.5,11 74.8,5.75" fill="#f0f0f0" stroke="#d8d8d8" stroke-width="1"/></svg>
<div class="c dt" style="top:522.0px">2018-06-05</div>
<div class="c pr" style="left:928px;top:513.10px;line-height:18.5px">05. Tillverka<br>produkter</div>
<div class="c" style="left:1079px;top:522.0px">Syd</div>
<div class="c" style="left:1230px;top:522.0px">Produktion</div>

<div class="c" style="left:1532px;top:522.0px">ISO 9001</div>
<div class="c lv" style="top:522.0px">1</div>
<svg style="position:absolute;left:1888px;top:522.0px" width="8" height="18" viewBox="0 0 8 18"><path d="M8 1.2 A8 8 0 0 0 8 16.8" fill="none" stroke="#8a8a8a" stroke-width="1.1"/></svg>
<div class="row" style="top:553px;height:44px;background:#ededed"></div>
<svg class="exp" style="top:565.0px" width="14" height="22" viewBox="0 0 14 22"><polygon points="5.5,1.5 14,11 5.5,20.6 2.4,17.2 8,11 2.4,4.6" fill="#3bbde8" stroke="#3a4a55" stroke-width="0.8" stroke-linejoin="round"/></svg>
<svg class="pen" style="top:567.0px" width="18" height="18" viewBox="0 0 18 18"><path d="M4.5 13.5 L12.5 5.5" stroke="#fff" stroke-width="7" stroke-linecap="round"/><path d="M4.8 12.8 L12 5.6" stroke="#6f6f6f" stroke-width="4.6" stroke-linecap="butt"/><polygon points="1.6,16.4 2.4,12.2 5.8,15.6" fill="#6f6f6f"/><path d="M13.6 2.6 L15.4 4.4" stroke="#6f6f6f" stroke-width="3"/></svg>
<div class="c t b" style="top:566.0px">Fel material levererades till avdelningen</div>
<svg class="ph" style="top:570.7px" width="92" height="12" viewBox="0 0 92 12"><polygon points="0.5,0.5 13.6,0.5 16,5.75 13.6,11 0.5,11 2.8,5.75" fill="#2f86fe" stroke="#2f86fe" stroke-width="1"/><polygon points="18.5,0.5 31.6,0.5 34,5.75 31.6,11 18.5,11 20.8,5.75" fill="#fff" stroke="#2f86fe" stroke-width="1"/><polygon points="36.5,0.5 49.6,0.5 52,5.75 49.6,11 36.5,11 38.8,5.75" fill="#f0f0f0" stroke="#d8d8d8" stroke-width="1"/><polygon points="54.5,0.5 67.6,0.5 70,5.75 67.6,11 54.5,11 56.8,5.75" fill="#f0f0f0" stroke="#d8d8d8" stroke-width="1"/><polygon points="72.5,0.5 85.6,0.5 88,5.75 85.6,11 72.5,11 74.8,5.75" fill="#f0f0f0" stroke="#d8d8d8" stroke-width="1"/></svg>
<div class="c dt" style="top:566.0px">2018-06-15</div>
<div class="c pr" style="left:928px;top:557.10px;line-height:18.5px">05. Tillverka<br>produkter</div>
<div class="c" style="left:1079px;top:566.0px">Syd</div>
<div class="c" style="left:1230px;top:566.0px">Lager</div>
<div class="c pd" style="left:1381px;top:557.10px;line-height:18.5px">Produkt A, Produkt<br>C</div>
<div class="c" style="left:1532px;top:566.0px">ISO 9001</div>
<div class="c lv" style="top:566.0px">1</div>
<svg style="position:absolute;left:1888px;top:566.0px" width="8" height="18" viewBox="0 0 8 18"><path d="M8 1.2 A8 8 0 0 0 8 16.8" fill="none" stroke="#8a8a8a" stroke-width="1.1"/></svg>
<div class="row" style="top:597px;height:43px;background:#fff"></div>
<svg class="exp" style="top:608.5px" width="14" height="22" viewBox="0 0 14 22"><polygon points="5.5,1.5 14,11 5.5,20.6 2.4,17.2 8,11 2.4,4.6" fill="#3bbde8" stroke="#3a4a55" stroke-width="0.8" stroke-linejoin="round"/></svg>
<svg class="pen" style="top:610.5px" width="18" height="18" viewBox="0 0 18 18"><path d="M4.5 13.5 L12.5 5.5" stroke="#fff" stroke-width="7" stroke-linecap="round"/><path d="M4.8 12.8 L12 5.6" stroke="#6f6f6f" stroke-width="4.6" stroke-linecap="butt"/><polygon points="1.6,16.4 2.4,12.2 5.8,15.6" fill="#6f6f6f"/><path d="M13.6 2.6 L15.4 4.4" stroke="#6f6f6f" stroke-width="3"/></svg>
<div class="c t b" style="top:609.5px">Skada på utrustning</div>
<svg class="ph" style="top:614.2px" width="92" height="12" viewBox="0 0 92 12"><polygon points="0.5,0.5 13.6,0.5 16,5.75 13.6,11 0.5,11 2.8,5.75" fill="#2f86fe" stroke="#2f86fe" stroke-width="1"/><polygon points="18.5,0.5 31.6,0.5 34,5.75 31.6,11 18.5,11 20.8,5.75" fill="#2f86fe" stroke="#2f86fe" stroke-width="1"/><polygon points="36.5,0.5 49.6,0.5 52,5.75 49.6,11 36.5,11 38.8,5.75" fill="#2f86fe" stroke="#2f86fe" stroke-width="1"/><polygon points="54.5,0.5 67.6,0.5 70,5.75 67.6,11 54.5,11 56.8,5.75" fill="#2f86fe" stroke="#2f86fe" stroke-width="1"/><polygon points="72.5,0.5 85.6,0.5 88,5.75 85.6,11 72.5,11 74.8,5.75" fill="#fff" stroke="#2f86fe" stroke-width="1"/></svg>
<div class="c dt" style="top:609.5px">2018-06-20</div>
<div class="c pr" style="left:928px;top:600.60px;line-height:18.5px">02. Mäta, följa upp<br>&amp; analysera</div>
<div class="c" style="left:1079px;top:609.5px">Väst</div>
<div class="c" style="left:1230px;top:609.5px">Produktion</div>
<div class="c pd" style="left:1381px;top:600.60px;line-height:18.5px">Produkt A, Produkt<br>C</div>
<div class="c" style="left:1532px;top:609.5px">ISO 9001</div>
<div class="c lv" style="top:609.5px">1</div>
<svg style="position:absolute;left:1888px;top:609.5px" width="8" height="18" viewBox="0 0 8 18"><path d="M8 1.2 A8 8 0 0 0 8 16.8" fill="none" stroke="#8a8a8a" stroke-width="1.1"/></svg>
<div class="row" style="top:640px;height:63px;background:#ededed"></div>
<svg class="exp" style="top:661.5px" width="14" height="22" viewBox="0 0 14 22"><polygon points="5.5,1.5 14,11 5.5,20.6 2.4,17.2 8,11 2.4,4.6" fill="#3bbde8" stroke="#3a4a55" stroke-width="0.8" stroke-linejoin="round"/></svg>
<svg class="pen" style="top:663.5px" width="18" height="18" viewBox="0 0 18 18"><path d="M4.5 13.5 L12.5 5.5" stroke="#fff" stroke-width="7" stroke-linecap="round"/><path d="M4.8 12.8 L12 5.6" stroke="#6f6f6f" stroke-width="4.6" stroke-linecap="butt"/><polygon points="1.6,16.4 2.4,12.2 5.8,15.6" fill="#6f6f6f"/><path d="M13.6 2.6 L15.4 4.4" stroke="#6f6f6f" stroke-width="3"/></svg>
<div class="c t b" style="top:662.5px">Lastramp skadades vid leverans av gods</div>
<svg class="ph" style="top:667.2px" width="92" height="12" viewBox="0 0 92 12"><polygon points="0.5,0.5 13.6,0.5 16,5.75 13.6,11 0.5,11 2.8,5.75" fill="#2f86fe" stroke="#2f86fe" stroke-width="1"/><polygon points="18.5,0.5 31.6,0.5 34,5.75 31.6,11 18.5,11 20.8,5.75" fill="#2f86fe" stroke="#2f86fe" stroke-width="1"/><polygon points="36.5,0.5 49.6,0.5 52,5.75 49.6,11 36.5,11 38.8,5.75" fill="#2f86fe" stroke="#2f86fe" stroke-width="1"/><polygon points="54.5,0.5 67.6,0.5 70,5.75 67.6,11 54.5,11 56.8,5.75" fill="#fff" stroke="#2f86fe" stroke-width="1"/><polygon points="72.5,0.5 85.6,0.5 88,5.75 85.6,11 72.5,11 74.8,5.75" fill="#f0f0f0" stroke="#d8d8d8" stroke-width="1"/></svg>
<div class="c dt" style="top:662.5px">2018-06-21</div>
<div class="c pr" style="left:928px;top:653.60px;line-height:18.5px">07. Lager och<br>leverans</div>
<div class="c" style="left:1079px;top:662.5px">Syd</div>
<div class="c" style="left:1230px;top:662.5px">Lager</div>
<div class="c pd" style="left:1381px;top:644.35px;line-height:18.5px">Produkt C, Produkt<br>D, Produkt E,<br>Produkt G</div>
<div class="c" style="left:1532px;top:662.5px">ISO 9001</div>
<div class="c lv" style="top:662.5px">1</div>
<svg style="position:absolute;left:1888px;top:662.5px" width="8" height="18" viewBox="0 0 8 18"><path d="M8 1.2 A8 8 0 0 0 8 16.8" fill="none" stroke="#8a8a8a" stroke-width="1.1"/></svg>
<div class="row" style="top:703px;height:43px;background:#fff"></div>
<svg class="exp" style="top:714.5px" width="14" height="22" viewBox="0 0 14 22"><polygon points="5.5,1.5 14,11 5.5,20.6 2.4,17.2 8,11 2.4,4.6" fill="#3bbde8" stroke="#3a4a55" stroke-width="0.8" stroke-linejoin="round"/></svg>
<svg class="pen" style="top:716.5px" width="18" height="18" viewBox="0 0 18 18"><path d="M4.5 13.5 L12.5 5.5" stroke="#fff" stroke-width="7" stroke-linecap="round"/><path d="M4.8 12.8 L12 5.6" stroke="#6f6f6f" stroke-width="4.6" stroke-linecap="butt"/><polygon points="1.6,16.4 2.4,12.2 5.8,15.6" fill="#6f6f6f"/><path d="M13.6 2.6 L15.4 4.4" stroke="#6f6f6f" stroke-width="3"/></svg>
<div class="c t b" style="top:715.5px">Avvikelse i lastning</div>
<svg class="ph" style="top:720.2px" width="92" height="12" viewBox="0 0 92 12"><polygon points="0.5,0.5 13.6,0.5 16,5.75 13.6,11 0.5,11 2.8,5.75" fill="#2f86fe" stroke="#2f86fe" stroke-width="1"/><polygon points="18.5,0.5 31.6,0.5 34,5.75 31.6,11 18.5,11 20.8,5.75" fill="#fff" stroke="#2f86fe" stroke-width="1"/><polygon points="36.5,0.5 49.6,0.5 52,5.75 49.6,11 36.5,11 38.8,5.75" fill="#f0f0f0" stroke="#d8d8d8" stroke-width="1"/><polygon points="54.5,0.5 67.6,0.5 70,5.75 67.6,11 54.5,11 56.8,5.75" fill="#f0f0f0" stroke="#d8d8d8" stroke-width="1"/><polygon points="72.5,0.5 85.6,0.5 88,5.75 85.6,11 72.5,11 74.8,5.75" fill="#f0f0f0" stroke="#d8d8d8" stroke-width="1"/></svg>
<div class="c dt" style="top:715.5px">2018-06-26</div>
<div class="c pr" style="left:928px;top:706.60px;line-height:18.5px">07. Lager och<br>leverans</div>
<div class="c" style="left:1079px;top:715.5px">Nord, Öst</div>
<div class="c" style="left:1230px;top:715.5px">Inköp</div>
<div class="c pd" style="left:1381px;top:715.85px;line-height:18.5px">Produkt H</div>
<div class="c" style="left:1532px;top:715.5px">ISO 9001</div>
<div class="c lv" style="top:715.5px">1</div>
<svg style="position:absolute;left:1888px;top:715.5px" width="8" height="18" viewBox="0 0 8 18"><path d="M8 1.2 A8 8 0 0 0 8 16.8" fill="none" stroke="#8a8a8a" stroke-width="1.1"/></svg>
<div class="row" style="top:746px;height:44px;background:#ededed"></div>
<svg class="exp" style="top:758.0px" width="14" height="22" viewBox="0 0 14 22"><polygon points="5.5,1.5 14,11 5.5,20.6 2.4,17.2 8,11 2.4,4.6" fill="#3bbde8" stroke="#3a4a55" stroke-width="0.8" stroke-linejoin="round"/></svg>
<svg class="pen" style="top:760.0px" width="18" height="18" viewBox="0 0 18 18"><path d="M4.5 13.5 L12.5 5.5" stroke="#fff" stroke-width="7" stroke-linecap="round"/><path d="M4.8 12.8 L12 5.6" stroke="#6f6f6f" stroke-width="4.6" stroke-linecap="butt"/><polygon points="1.6,16.4 2.4,12.2 5.8,15.6" fill="#6f6f6f"/><path d="M13.6 2.6 L15.4 4.4" stroke="#6f6f6f" stroke-width="3"/></svg>
<div class="c t b" style="top:759.0px">Hittat brister i versionshanteringen av rutiner</div>
<svg class="ph" style="top:763.7px" width="92" height="12" viewBox="0 0 92 12"><polygon points="0.5,0.5 13.6,0.5 16,5.75 13.6,11 0.5,11 2.8,5.75" fill="#2f86fe" stroke="#2f86fe" stroke-width="1"/><polygon points="18.5,0.5 31.6,0.5 34,5.75 31.6,11 18.5,11 20.8,5.75" fill="#fff" stroke="#2f86fe" stroke-width="1"/><polygon points="36.5,0.5 49.6,0.5 52,5.75 49.6,11 36.5,11 38.8,5.75" fill="#f0f0f0" stroke="#d8d8d8" stroke-width="1"/><polygon points="54.5,0.5 67.6,0.5 70,5.75 67.6,11 54.5,11 56.8,5.75" fill="#f0f0f0" stroke="#d8d8d8" stroke-width="1"/><polygon points="72.5,0.5 85.6,0.5 88,5.75 85.6,11 72.5,11 74.8,5.75" fill="#f0f0f0" stroke="#d8d8d8" stroke-width="1"/></svg>
<div class="c dt" style="top:759.0px">2018-06-27</div>
<div class="c pr" style="left:928px;top:750.10px;line-height:18.5px">01. Leda &amp; styra<br>verksamheten</div>
<div class="c" style="left:1079px;top:759.0px">Öst</div>
<div class="c" style="left:1230px;top:759.0px">Ledning</div>

<div class="c lv" style="top:759.0px">1</div>
<svg style="position:absolute;left:1888px;top:759.0px" width="8" height="18" viewBox="0 0 8 18"><path d="M8 1.2 A8 8 0 0 0 8 16.8" fill="none" stroke="#8a8a8a" stroke-width="1.1"/></svg>
<div class="row" style="top:790px;height:38px;background:#fff"></div>
<svg class="exp" style="top:799.0px" width="14" height="22" viewBox="0 0 14 22"><polygon points="5.5,1.5 14,11 5.5,20.6 2.4,17.2 8,11 2.4,4.6" fill="#3bbde8" stroke="#3a4a55" stroke-width="0.8" stroke-linejoin="round"/></svg>
<svg class="pen" style="top:801.0px" width="18" height="18" viewBox="0 0 18 18"><path d="M4.5 13.5 L12.5 5.5" stroke="#fff" stroke-width="7" stroke-linecap="round"/><path d="M4.8 12.8 L12 5.6" stroke="#6f6f6f" stroke-width="4.6" stroke-linecap="butt"/><polygon points="1.6,16.4 2.4,12.2 5.8,15.6" fill="#6f6f6f"/><path d="M13.6 2.6 L15.4 4.4" stroke="#6f6f6f" stroke-width="3"/></svg>
<div class="c t b" style="top:800.0px">Obehöriga inne på fabriksområdet</div>
<svg class="ph" style="top:804.7px" width="92" height="12" viewBox="0 0 92 12"><polygon points="0.5,0.5 13.6,0.5 16,5.75 13.6,11 0.5,11 2.8,5.75" fill="#2f86fe" stroke="#2f86fe" stroke-width="1"/><polygon points="18.5,0.5 31.6,0.5 34,5.75 31.6,11 18.5,11 20.8,5.75" fill="#fff" stroke="#2f86fe" stroke-width="1"/><polygon points="36.5,0.5 49.6,0.5 52,5.75 49.6,11 36.5,11 38.8,5.75" fill="#f0f0f0" stroke="#d8d8d8" stroke-width="1"/><polygon points="54.5,0.5 67.6,0.5 70,5.75 67.6,11 54.5,11 56.8,5.75" fill="#f0f0f0" stroke="#d8d8d8" stroke-width="1"/><polygon points="72.5,0.5 85.6,0.5 88,5.75 85.6,11 72.5,11 74.8,5.75" fill="#f0f0f0" stroke="#d8d8d8" stroke-width="1"/></svg>
<div class="c dt" style="top:800.0px">2018-08-21</div>
<div class="c pr" style="left:928px;top:800.35px;line-height:18.5px">11. HR</div>
<div class="c" style="left:1079px;top:800.0px">Polen</div>
<div class="c" style="left:1230px;top:800.0px">Inköp</div>

<div class="c lv" style="top:800.0px">1</div>
<svg style="position:absolute;left:1798px;top:801.0px" width="16" height="18" viewBox="0 0 16 18"><rect x="1" y="0.5" width="2.6" height="16.5" fill="#666"/><polygon points="4.5,1 14,5.8 4.5,10.8" fill="#ff6b6b"/></svg>
<svg style="position:absolute;left:1888px;top:800.0px" width="8" height="18" viewBox="0 0 8 18"><path d="M8 1.2 A8 8 0 0 0 8 16.8" fill="none" stroke="#8a8a8a" stroke-width="1.1"/></svg>
<div class="row" style="top:828px;height:44px;background:#ededed"></div>
<svg class="exp" style="top:840.0px" width="14" height="22" viewBox="0 0 14 22"><polygon points="5.5,1.5 14,11 5.5,20.6 2.4,17.2 8,11 2.4,4.6" fill="#3bbde8" stroke="#3a4a55" stroke-width="0.8" stroke-linejoin="round"/></svg>
<svg class="pen" style="top:842.0px" width="18" height="18" viewBox="0 0 18 18"><path d="M4.5 13.5 L12.5 5.5" stroke="#fff" stroke-width="7" stroke-linecap="round"/><path d="M4.8 12.8 L12 5.6" stroke="#6f6f6f" stroke-width="4.6" stroke-linecap="butt"/><polygon points="1.6,16.4 2.4,12.2 5.8,15.6" fill="#6f6f6f"/><path d="M13.6 2.6 L15.4 4.4" stroke="#6f6f6f" stroke-width="3"/></svg>
<div class="c t b" style="top:841.0px">Pallar ramlar ständigt ner från hyllorna</div>
<svg class="ph" style="top:845.7px" width="92" height="12" viewBox="0 0 92 12"><polygon points="0.5,0.5 13.6,0.5 16,5.75 13.6,11 0.5,11 2.8,5.75" fill="#2f86fe" stroke="#2f86fe" stroke-width="1"/><polygon points="18.5,0.5 31.6,0.5 34,5.75 31.6,11 18.5,11 20.8,5.75" fill="#fff" stroke="#2f86fe" stroke-width="1"/><polygon points="36.5,0.5 49.6,0.5 52,5.75 49.6,11 36.5,11 38.8,5.75" fill="#f0f0f0" stroke="#d8d8d8" stroke-width="1"/><polygon points="54.5,0.5 67.6,0.5 70,5.75 67.6,11 54.5,11 56.8,5.75" fill="#f0f0f0" stroke="#d8d8d8" stroke-width="1"/><polygon points="72.5,0.5 85.6,0.5 88,5.75 85.6,11 72.5,11 74.8,5.75" fill="#f0f0f0" stroke="#d8d8d8" stroke-width="1"/></svg>
<div class="c dt" style="top:841.0px">2018-08-24</div>
<div class="c pr" style="left:928px;top:832.10px;line-height:18.5px">07. Lager och<br>leverans</div>
<div class="c" style="left:1079px;top:841.0px">Öst</div>
<div class="c" style="left:1230px;top:841.0px">Inköp</div>

<div class="c lv" style="top:841.0px">1</div>
<svg style="position:absolute;left:1888px;top:841.0px" width="8" height="18" viewBox="0 0 8 18"><path d="M8 1.2 A8 8 0 0 0 8 16.8" fill="none" stroke="#8a8a8a" stroke-width="1.1"/></svg>
<div class="row" style="top:872px;height:44px;background:#fff"></div>
<svg class="exp" style="top:884.0px" width="14" height="22" viewBox="0 0 14 22"><polygon points="5.5,1.5 14,11 5.5,20.6 2.4,17.2 8,11 2.4,4.6" fill="#3bbde8" stroke="#3a4a55" stroke-width="0.8" stroke-linejoin="round"/></svg>
<svg class="pen" style="top:886.0px" width="18" height="18" viewBox="0 0 18 18"><path d="M4.5 13.5 L12.5 5.5" stroke="#fff" stroke-width="7" stroke-linecap="round"/><path d="M4.8 12.8 L12 5.6" stroke="#6f6f6f" stroke-width="4.6" stroke-linecap="butt"/><polygon points="1.6,16.4 2.4,12.2 5.8,15.6" fill="#6f6f6f"/><path d="M13.6 2.6 L15.4 4.4" stroke="#6f6f6f" stroke-width="3"/></svg>
<div class="c t b" style="top:885.0px">Fel på produkt A</div>
<svg class="ph" style="top:889.7px" width="92" height="12" viewBox="0 0 92 12"><polygon points="0.5,0.5 13.6,0.5 16,5.75 13.6,11 0.5,11 2.8,5.75" fill="#2f86fe" stroke="#2f86fe" stroke-width="1"/><polygon points="18.5,0.5 31.6,0.5 34,5.75 31.6,11 18.5,11 20.8,5.75" fill="#2f86fe" stroke="#2f86fe" stroke-width="1"/><polygon points="36.5,0.5 49.6,0.5 52,5.75 49.6,11 36.5,11 38.8,5.75" fill="#2f86fe" stroke="#2f86fe" stroke-width="1"/><polygon points="54.5,0.5 67.6,0.5 70,5.75 67.6,11 54.5,11 56.8,5.75" fill="#fff" stroke="#2f86fe" stroke-width="1"/><polygon points="72.5,0.5 85.6,0.5 88,5.75 85.6,11 72.5,11 74.8,5.75" fill="#f0f0f0" stroke="#d8d8d8" stroke-width="1"/></svg>
<div class="c dt" style="top:885.0px">2018-08-24</div>
<div class="c pr" style="left:928px;top:876.10px;line-height:18.5px">05. Tillverka<br>produkter</div>
<div class="c" style="left:1079px;top:885.0px">Syd</div>
<div class="c" style="left:1230px;top:885.0px">Produktion</div>
<div class="c pd" style="left:1381px;top:885.35px;line-height:18.5px">Produkt A</div>
<div class="c" style="left:1532px;top:885.0px">IATF 16949</div>
<div class="c lv" style="top:885.0px">1</div>
<svg style="position:absolute;left:1888px;top:885.0px" width="8" height="18" viewBox="0 0 8 18"><path d="M8 1.2 A8 8 0 0 0 8 16.8" fill="none" stroke="#8a8a8a" stroke-width="1.1"/></svg>
<div class="row" style="top:916px;height:43px;background:#ededed"></div>
<svg class="exp" style="top:927.5px" width="14" height="22" viewBox="0 0 14 22"><polygon points="5.5,1.5 14,11 5.5,20.6 2.4,17.2 8,11 2.4,4.6" fill="#3bbde8" stroke="#3a4a55" stroke-width="0.8" stroke-linejoin="round"/></svg>
<svg class="pen" style="top:929.5px" width="18" height="18" viewBox="0 0 18 18"><path d="M4.5 13.5 L12.5 5.5" stroke="#fff" stroke-width="7" stroke-linecap="round"/><path d="M4.8 12.8 L12 5.6" stroke="#6f6f6f" stroke-width="4.6" stroke-linecap="butt"/><polygon points="1.6,16.4 2.4,12.2 5.8,15.6" fill="#6f6f6f"/><path d="M13.6 2.6 L15.4 4.4" stroke="#6f6f6f" stroke-width="3"/></svg>
<div class="c t b" style="top:928.5px">Trasiga kärl</div>
<svg class="ph" style="top:933.2px" width="92" height="12" viewBox="0 0 92 12"><polygon points="0.5,0.5 13.6,0.5 16,5.75 13.6,11 0.5,11 2.8,5.75" fill="#2f86fe" stroke="#2f86fe" stroke-width="1"/><polygon points="18.5,0.5 31.6,0.5 34,5.75 31.6,11 18.5,11 20.8,5.75" fill="#fff" stroke="#2f86fe" stroke-width="1"/><polygon points="36.5,0.5 49.6,0.5 52,5.75 49.6,11 36.5,11 38.8,5.75" fill="#f0f0f0" stroke="#d8d8d8" stroke-width="1"/><polygon points="54.5,0.5 67.6,0.5 70,5.75 67.6,11 54.5,11 56.8,5.75" fill="#f0f0f0" stroke="#d8d8d8" stroke-width="1"/><polygon points="72.5,0.5 85.6,0.5 88,5.75 85.6,11 72.5,11 74.8,5.75" fill="#f0f0f0" stroke="#d8d8d8" stroke-width="1"/></svg>
<div class="c dt" style="top:928.5px">2018-08-28</div>
<div class="c pr" style="left:928px;top:919.60px;line-height:18.5px">07. Lager och<br>leverans</div>
<div class="c" style="left:1079px;top:928.5px">Nord</div>
<div class="c" style="left:1230px;top:928.5px">Produktion</div>
<div class="c pd" style="left:1381px;top:928.85px;line-height:18.5px">Produkt D</div>
<div class="c" style="left:1532px;top:928.5px">ISO 9001</div>
<div class="c lv" style="top:928.5px">1</div>
<svg style="position:absolute;left:1888px;top:928.5px" width="8" height="18" viewBox="0 0 8 18"><path d="M8 1.2 A8 8 0 0 0 8 16.8" fill="none" stroke="#8a8a8a" stroke-width="1.1"/></svg>
<div class="row" style="top:959px;height:38px;background:#fff"></div>
<svg class="exp" style="top:968.0px" width="14" height="22" viewBox="0 0 14 22"><polygon points="5.5,1.5 14,11 5.5,20.6 2.4,17.2 8,11 2.4,4.6" fill="#3bbde8" stroke="#3a4a55" stroke-width="0.8" stroke-linejoin="round"/></svg>
<svg class="pen" style="top:970.0px" width="18" height="18" viewBox="0 0 18 18"><path d="M4.5 13.5 L12.5 5.5" stroke="#fff" stroke-width="7" stroke-linecap="round"/><path d="M4.8 12.8 L12 5.6" stroke="#6f6f6f" stroke-width="4.6" stroke-linecap="butt"/><polygon points="1.6,16.4 2.4,12.2 5.8,15.6" fill="#6f6f6f"/><path d="M13.6 2.6 L15.4 4.4" stroke="#6f6f6f" stroke-width="3"/></svg>
<div class="c t b" style="top:969.0px">Avvikelse i köket</div>
<svg class="ph" style="top:973.7px" width="92" height="12" viewBox="0 0 92 12"><polygon points="0.5,0.5 13.6,0.5 16,5.75 13.6,11 0.5,11 2.8,5.75" fill="#2f86fe" stroke="#2f86fe" stroke-width="1"/><polygon points="18.5,0.5 31.6,0.5 34,5.75 31.6,11 18.5,11 20.8,5.75" fill="#2f86fe" stroke="#2f86fe" stroke-width="1"/><polygon points="36.5,0.5 49.6,0.5 52,5.75 49.6,11 36.5,11 38.8,5.75" fill="#fff" stroke="#2f86fe" stroke-width="1"/><polygon points="54.5,0.5 67.6,0.5 70,5.75 67.6,11 54.5,11 56.8,5.75" fill="#f0f0f0" stroke="#d8d8d8" stroke-width="1"/><polygon points="72.5,0.5 85.6,0.5 88,5.75 85.6,11 72.5,11 74.8,5.75" fill="#f0f0f0" stroke="#d8d8d8" stroke-width="1"/></svg>
<div class="c dt" style="top:969.0px">2018-09-04</div>
<div class="c pr" style="left:928px;top:969.35px;line-height:18.5px">12. Miljö</div>
<div class="c" style="left:1079px;top:969.0px">Polen</div>
<div class="c" style="left:1230px;top:969.0px">Inköp</div>
<div class="c pd" style="left:1381px;top:969.35px;line-height:18.5px">Produkt I</div>
<div class="c lv" style="top:969.0px">1</div>
<svg style="position:absolute;left:1888px;top:969.0px" width="8" height="18" viewBox="0 0 8 18"><path d="M8 1.2 A8 8 0 0 0 8 16.8" fill="none" stroke="#8a8a8a" stroke-width="1.1"/></svg>
<div class="row" style="top:997px;height:44px;background:#ededed"></div>
<svg class="exp" style="top:1009.0px" width="14" height="22" viewBox="0 0 14 22"><polygon points="5.5,1.5 14,11 5.5,20.6 2.4,17.2 8,11 2.4,4.6" fill="#3bbde8" stroke="#3a4a55" stroke-width="0.8" stroke-linejoin="round"/></svg>
<svg class="pen" style="top:1011.0px" width="18" height="18" viewBox="0 0 18 18"><path d="M4.5 13.5 L12.5 5.5" stroke="#fff" stroke-width="7" stroke-linecap="round"/><path d="M4.8 12.8 L12 5.6" stroke="#6f6f6f" stroke-width="4.6" stroke-linecap="butt"/><polygon points="1.6,16.4 2.4,12.2 5.8,15.6" fill="#6f6f6f"/><path d="M13.6 2.6 L15.4 4.4" stroke="#6f6f6f" stroke-width="3"/></svg>
<div class="c t b" style="top:1010.0px">Bristfällig dokumentation till kund</div>
<svg class="ph" style="top:1014.7px" width="92" height="12" viewBox="0 0 92 12"><polygon points="0.5,0.5 13.6,0.5 16,5.75 13.6,11 0.5,11 2.8,5.75" fill="#2f86fe" stroke="#2f86fe" stroke-width="1"/><polygon points="18.5,0.5 31.6,0.5 34,5.75 31.6,11 18.5,11 20.8,5.75" fill="#fff" stroke="#2f86fe" stroke-width="1"/><polygon points="36.5,0.5 49.6,0.5 52,5.75 49.6,11 36.5,11 38.8,5.75" fill="#f0f0f0" stroke="#d8d8d8" stroke-width="1"/><polygon points="54.5,0.5 67.6,0.5 70,5.75 67.6,11 54.5,11 56.8,5.75" fill="#f0f0f0" stroke="#d8d8d8" stroke-width="1"/><polygon points="72.5,0.5 85.6,0.5 88,5.75 85.6,11 72.5,11 74.8,5.75" fill="#f0f0f0" stroke="#d8d8d8" stroke-width="1"/></svg>
<div class="c dt" style="top:1010.0px">2018-09-07</div>
<div class="c pr" style="left:928px;top:1001.10px;line-height:18.5px">03. Vårda kunder &amp;<br>sälja produkter</div>
<div class="c" style="left:1079px;top:1010.0px">Syd</div>
<div class="c" style="left:1230px;top:1010.0px">Inköp</div>

<div class="c lv" style="top:1010.0px">1</div>
<svg style="position:absolute;left:1888px;top:1010.0px" width="8" height="18" viewBox="0 0 8 18"><path d="M8 1.2 A8 8 0 0 0 8 16.8" fill="none" stroke="#8a8a8a" stroke-width="1.1"/></svg>
<div class="row" style="top:1041px;height:14px;background:#fff"></div>
<div class="c" style="left:929px;top:1046px">07. Lager och</div>

<!-- vertical scrollbar -->
<div class="abs" style="left:1895px;top:0;width:25px;height:1055px;background:#f1f1f1"></div>
<svg class="abs" style="left:1901px;top:9px" width="13" height="7" viewBox="0 0 13 7"><path d="M0.5 6.5 L6.5 0.5 L12.5 6.5 Z" fill="#a3a3a3"/></svg>
<div class="abs" style="left:1897px;top:25px;width:21px;height:94px;background:#c1c1c1"></div>
<svg class="abs" style="left:1901px;top:1038px" width="13" height="7" viewBox="0 0 13 7"><path d="M0.5 0.5 H12.5 L6.5 6.5 Z" fill="#505050"/></svg>
<!-- horizontal scrollbar -->
<div class="abs" style="left:0;top:1055px;width:1895px;height:25px;background:#f1f1f1"></div>
<div class="abs" style="left:1895px;top:1055px;width:25px;height:25px;background:#dcdcdc"></div>
<div class="abs" style="left:25px;top:1057px;width:1398px;height:21px;background:#c1c1c1"></div>
<svg class="abs" style="left:9px;top:1062px" width="7" height="12" viewBox="0 0 7 12"><path d="M6.5 0.5 V11.5 L0.5 6 Z" fill="#a3a3a3"/></svg>
<svg class="abs" style="left:1879px;top:1062px" width="7" height="12" viewBox="0 0 7 12"><path d="M0.5 0.5 V11.5 L6.5 6 Z" fill="#505050"/></svg>


</div>
</body></html>
